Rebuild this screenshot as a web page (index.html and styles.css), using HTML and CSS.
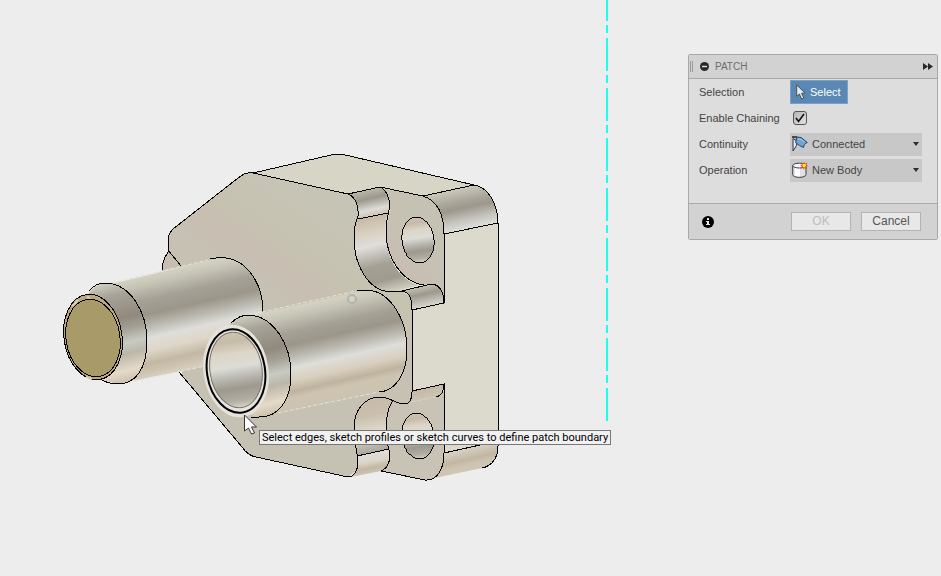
FILE: index.html
```html
<!DOCTYPE html>
<html lang="en">
<head>
    <meta charset="UTF-8">
    <meta name="viewport" content="width=device-width, initial-scale=1">
    <title>Patch</title>
    <link rel="stylesheet" href="styles.css">
</head>
<body>
    <main class="viewport">
        <svg class="scene" viewBox="0 0 941 576" preserveAspectRatio="xMinYMin meet" aria-hidden="true">
            <defs>
                <linearGradient id="plate" gradientUnits="userSpaceOnUse" x1="200" y1="330" x2="300" y2="180">
                    <stop offset="0" stop-color="#c6c2b3"/>
                    <stop offset="0.38" stop-color="#c6c1b2"/>
                    <stop offset="0.53" stop-color="#c8beb1"/>
                    <stop offset="0.68" stop-color="#c6c2b2"/>
                    <stop offset="1" stop-color="#c6c4b5"/>
                </linearGradient>
                <linearGradient id="boss" gradientUnits="userSpaceOnUse" x1="390" y1="270" x2="440" y2="220">
                    <stop offset="0" stop-color="#c8bdb1"/>
                    <stop offset="0.6" stop-color="#c6c2b3"/>
                </linearGradient>
                <linearGradient id="tubeLeft" gradientUnits="userSpaceOnUse" x1="160" y1="271" x2="183" y2="373">
                    <stop offset="0" stop-color="#d5d4c4"/>
                    <stop offset="0.1" stop-color="#c5c3b5"/>
                    <stop offset="0.24" stop-color="#a5a196"/>
                    <stop offset="0.38" stop-color="#9c968a"/>
                    <stop offset="0.5" stop-color="#bdbbb2"/>
                    <stop offset="0.6" stop-color="#dededa"/>
                    <stop offset="0.72" stop-color="#ded6c8"/>
                    <stop offset="0.84" stop-color="#c3b8a3"/>
                    <stop offset="0.92" stop-color="#cec4b1"/>
                    <stop offset="1" stop-color="#dcd6c8"/>
                </linearGradient>
                <linearGradient id="tubeRight" gradientUnits="userSpaceOnUse" x1="310" y1="302" x2="333" y2="404">
                    <stop offset="0" stop-color="#d5d4c4"/>
                    <stop offset="0.1" stop-color="#c5c3b5"/>
                    <stop offset="0.24" stop-color="#a5a196"/>
                    <stop offset="0.36" stop-color="#9c968a"/>
                    <stop offset="0.48" stop-color="#bdbbb2"/>
                    <stop offset="0.58" stop-color="#dededa"/>
                    <stop offset="0.7" stop-color="#d8cfbf"/>
                    <stop offset="0.8" stop-color="#beb39e"/>
                    <stop offset="0.86" stop-color="#cec4b1"/>
                    <stop offset="1" stop-color="#cbc2b0"/>
                </linearGradient>
                <linearGradient id="chamfer" x1="0.3" y1="0" x2="0.45" y2="1">
                    <stop offset="0" stop-color="#cfcebe"/>
                    <stop offset="0.14" stop-color="#a7a398"/>
                    <stop offset="0.38" stop-color="#91897d"/>
                    <stop offset="0.5" stop-color="#a5a197"/>
                    <stop offset="0.63" stop-color="#c8cbc3"/>
                    <stop offset="0.74" stop-color="#bbb7a8"/>
                    <stop offset="0.9" stop-color="#e5dac8"/>
                    <stop offset="1" stop-color="#cfc4af"/>
                </linearGradient>
                <linearGradient id="bore" x1="0.5" y1="0" x2="0.5" y2="1">
                    <stop offset="0" stop-color="#ccc4b4"/>
                    <stop offset="0.12" stop-color="#c6bba7"/>
                    <stop offset="0.28" stop-color="#ddd5c6"/>
                    <stop offset="0.46" stop-color="#dcdcd7"/>
                    <stop offset="0.6" stop-color="#b9b7af"/>
                    <stop offset="0.74" stop-color="#9e998e"/>
                    <stop offset="0.9" stop-color="#b0ada2"/>
                    <stop offset="1" stop-color="#d6d5c7"/>
                </linearGradient>
                <linearGradient id="corner" gradientUnits="userSpaceOnUse" x1="452" y1="190" x2="461" y2="231">
                    <stop offset="0" stop-color="#cbc9ba"/>
                    <stop offset="0.3" stop-color="#aaa69b"/>
                    <stop offset="0.48" stop-color="#9d978c"/>
                    <stop offset="0.75" stop-color="#c3c2bb"/>
                    <stop offset="1" stop-color="#e1e1dd"/>
                </linearGradient>
                <linearGradient id="grooveTop" gradientUnits="userSpaceOnUse" x1="364" y1="190" x2="370" y2="217">
                    <stop offset="0" stop-color="#bcb9ad"/>
                    <stop offset="0.35" stop-color="#9d988d"/>
                    <stop offset="0.75" stop-color="#dcdcd7"/>
                    <stop offset="1" stop-color="#cfc3ae"/>
                </linearGradient>
                <linearGradient id="groove" gradientUnits="userSpaceOnUse" x1="366" y1="217" x2="384" y2="292">
                    <stop offset="0" stop-color="#c5b9a4"/>
                    <stop offset="0.2" stop-color="#d9cfc0"/>
                    <stop offset="0.38" stop-color="#dededa"/>
                    <stop offset="0.65" stop-color="#a5a095"/>
                    <stop offset="0.85" stop-color="#a09b8f"/>
                    <stop offset="1" stop-color="#cccabb"/>
                </linearGradient>
                <linearGradient id="notch" gradientUnits="userSpaceOnUse" x1="421" y1="285" x2="426" y2="308">
                    <stop offset="0" stop-color="#cbc9ba"/>
                    <stop offset="0.4" stop-color="#9d988d"/>
                    <stop offset="1" stop-color="#deddd7"/>
                </linearGradient>
                <linearGradient id="notchLow" gradientUnits="userSpaceOnUse" x1="426" y1="387" x2="429" y2="400">
                    <stop offset="0" stop-color="#c3b8a4"/>
                    <stop offset="1" stop-color="#cfc6b5"/>
                </linearGradient>
                <linearGradient id="grooveLow" gradientUnits="userSpaceOnUse" x1="366" y1="398" x2="378" y2="456">
                    <stop offset="0" stop-color="#c4bba8"/>
                    <stop offset="0.3" stop-color="#cabfac"/>
                    <stop offset="0.6" stop-color="#e0dbd0"/>
                    <stop offset="0.85" stop-color="#b4b1a7"/>
                    <stop offset="1" stop-color="#a39e93"/>
                </linearGradient>
                <linearGradient id="grooveFoot" gradientUnits="userSpaceOnUse" x1="371" y1="452" x2="375" y2="474">
                    <stop offset="0" stop-color="#dededa"/>
                    <stop offset="0.4" stop-color="#ddd6c9"/>
                    <stop offset="0.7" stop-color="#c3b8a4"/>
                    <stop offset="1" stop-color="#cfc7b6"/>
                </linearGradient>
                <linearGradient id="footBand" gradientUnits="userSpaceOnUse" x1="460" y1="448" x2="466" y2="473">
                    <stop offset="0" stop-color="#dcd7ca"/>
                    <stop offset="0.5" stop-color="#c1b6a1"/>
                    <stop offset="0.7" stop-color="#cdc3b0"/>
                    <stop offset="1" stop-color="#cfc7b6"/>
                </linearGradient>
            </defs>

            <!-- construction axis -->
            <path class="axis" d="M607 -12V421"/>

            <!-- shaded faces -->
            <g>
                <path fill="#d7d5c6" d="M253 173L331 155L341 154L474 185L423 197L382 188L348 194Z"/>
                <path fill="#dcd9cd" d="M444 234L498 223V443L444 454V384L412 391V310L444 303Z"/>
                <path fill="url(#corner)" d="M423 196L474 185C488 187 498 204 498 223L444 234C444 213 436 200 423 196Z"/>
                <path fill="url(#footBand)" d="M444 453L498 441V446C498 458 492 466 482 468L430 479C439 475 444 465 444 453Z"/>
                <path fill="#c8beb0" d="M169 251C165 256 162 263 162 271L182 267Z"/>
                <path fill="url(#plate)" d="M253 173C246 172 242 175 238 178L173 229C169 233 168 236 168 241V250L182 267V375L242 447C246 453 250 456 256 457L348 477L357 470L413 400V310L410 296L402 291L391 292L358 216C359 203 355 197 348 194Z"/>
                <path fill="url(#boss)" d="M382 188L423 196C438 201 444 216 444 234V303L435 284L420 285C398 277 386 254 386 231C386 222 390 215 390 206C390 198 387 191 382 188Z"/>
                <path fill="url(#grooveTop)" d="M348 194L380 187C387 190 390 198 390 207L388 214L358 220C359 207 357 197 348 194Z"/>
                <path fill="url(#groove)" d="M358 219L388 213C384 225 386 238 388 249C392 268 405 282 420 285L391 292C367 291 354 263 354 238C354 231 355 226 358 219Z"/>
                <path fill="url(#notch)" d="M391 292L431 284C440 284 444 293 444 303L412 310C413 299 410 293 402 291Z"/>
                <path fill="url(#notchLow)" d="M412 391L444 384C444 391 441 397 436 397L411 402Z"/>
                <path fill="#c8c3b4" d="M393 401L402 404C408 405 412 401 412 402L436 397C441 396 444 393 444 389V453C444 468 438 481 425 480L381 471C388 468 390 461 389 450C385 432 385 411 393 401Z"/>
                <path fill="url(#grooveLow)" d="M354 427C354 410 365 397 380 397C385 397 389 399 393 401C385 412 386 432 389 449L357 456C355 446 354 437 354 427Z"/>
                <path fill="url(#grooveFoot)" d="M357 456L389 449C391 461 388 468 381 471L351 477C357 473 359 466 357 456Z"/>
                <ellipse fill="url(#bore)" cx="418" cy="240" rx="16" ry="23" transform="rotate(-8 418 240)"/>
                <ellipse fill="url(#bore)" cx="418" cy="436" rx="16" ry="23" transform="rotate(-8 418 436)"/>
            </g>

            <!-- model edges -->
            <g class="edges">
                <path d="M253 173L331 155L341 154L474 185C488 187 498 204 498 223V446C498 458 492 466 482 468"/>
                <path d="M253 173C246 172 242 175 238 178L173 229C169 233 168 236 168 241V250L181 266M169 251C165 256 162 263 162 270"/>
                <path d="M179 372L242 447C246 453 250 456 256 457L348 477C355 477 358 468 358 463C358 456 354 442 354 427C354 410 365 397 380 397C390 397 396 404 404 404C410 404 412 398 412 392V310C412 298 410 291 399 291"/>
                <path d="M253 173L348 194C356 197 359 208 358 216C355 223 354 231 354 238C354 263 367 291 391 292L402 291L431 284C440 284 444 293 444 303L412 310"/>
                <path d="M348 194L380 187L423 196C438 201 444 216 444 234V303M423 196L474 185M444 234L498 223"/>
                <path d="M380 187C387 190 391 201 389 210C387 219 386 223 386 231C386 258 402 282 424 285M358 219L388 213"/>
                <path d="M412 391L444 384V453C444 468 438 481 425 480L381 471C388 468 391 461 389 450C384 432 386 408 393 401M357 456L389 449M444 453L498 441M444 384C444 391 441 396 436 397"/>
                <ellipse cx="418" cy="240" rx="16" ry="23" transform="rotate(-8 418 240)"/>
                <ellipse cx="418" cy="436" rx="16" ry="23" transform="rotate(-8 418 436)"/>
            </g>

            <!-- left tube, already patched -->
            <path fill="url(#tubeLeft)" d="M103 286L210 260C245 250 263 283 263 312L225 362L117 384Z"/>
            <path fill="url(#chamfer)" d="M87 296C92 288 97 284 105 283C130 283 147 312 147 341C147 368 136 384 118 384L98 379Z"/>
            <g class="edges">
                <path d="M210 259C245 251 263 283 263 312M89 291C93 286 98 283 105 283C130 283 147 312 147 341C147 368 136 384 118 384C112 384 105 382 100 379"/>
            </g>
            <path class="hidden-edge" d="M112 283L208 260M128 383L205 366"/>
            <g class="edges">
                <ellipse fill="#b9aa78" cx="93" cy="337" rx="29" ry="43" transform="rotate(-9 93 337)"/>
                <ellipse fill="#a89b69" cx="93" cy="338" rx="27" ry="39" transform="rotate(-9 93 338)"/>
            </g>
            <path class="seam" d="M72 306L78 300M87 297L90 298M86 377L92 379"/>

            <!-- right tube, boundary highlighted -->
            <path fill="url(#tubeRight)" d="M248 316L357 292C389 283 407 319 407 350C407 373 396 391 379 392L258 417Z"/>
            <path fill="url(#chamfer)" d="M229 326C235 318 241 315 249 315C273 316 291 344 291 374C291 400 279 417 259 417L241 412Z"/>
            <g class="edges">
                <path d="M357 291C389 284 407 319 407 350C407 373 396 391 379 392M231 323C236 318 241 315 249 315C273 316 291 344 291 374C291 400 279 417 259 417H251"/>
            </g>
            <path class="hidden-edge" d="M262 312L356 291M278 413L379 392"/>
            <ellipse class="halo" cx="236" cy="371" rx="29" ry="43" transform="rotate(-9 236 371)"/>
            <ellipse fill="url(#bore)" stroke="#77736c" cx="236" cy="370" rx="26" ry="38" transform="rotate(-9 236 370)"/>
            <ellipse class="inner-halo" cx="236" cy="370" rx="28" ry="40" transform="rotate(-9 236 370)"/>
            <ellipse class="boundary" cx="236" cy="371" rx="29" ry="42" transform="rotate(-9 236 371)"/>
            <circle class="snap-point" cx="352" cy="299" r="4"/>

            <!-- mouse pointer -->
            <path class="pointer" d="M244.5 415V431L248.5 428L251.5 434L254.5 433L251.5 427H256.5Z"/>
        </svg>

        <div class="tooltip" role="tooltip">Select edges, sketch profiles or sketch curves to define patch boundary</div>

        <form class="panel" onsubmit="return false">
            <header class="panel-header">
                <span class="grip"></span>
                <button type="button" class="icon-btn" aria-label="Collapse">
                    <svg width="9" height="9" viewBox="0 0 9 9"><circle cx="4.5" cy="4.5" r="4.5" fill="#292929"/><path d="M2 4.5H7" stroke="#e4e4e4" stroke-width="1.4"/></svg>
                </button>
                <h1 class="panel-title">PATCH</h1>
                <button type="button" class="icon-btn expand" aria-label="Expand">
                    <svg width="10" height="7" viewBox="0 0 10 7"><path d="M0 0L5 3.5L0 7ZM5 0L10 3.5L5 7Z" fill="#292929"/></svg>
                </button>
            </header>

            <div class="panel-body">
                <div class="row">
                    <label for="select">Selection</label>
                    <button type="button" class="select-btn" id="select">
                        <svg width="10" height="16" viewBox="0 0 10 16"><path d="M.7 1V12.3L3.4 10L5.6 15L7.8 14L5.6 9.2H9.2Z" fill="#e9eaeb" stroke="#46505a"/></svg>
                        <span>Select</span>
                    </button>
                </div>
                <div class="row">
                    <label for="chaining">Enable Chaining</label>
                    <span class="check">
                        <input type="checkbox" id="chaining" checked>
                        <svg width="14" height="14" viewBox="0 0 14 14"><path d="M3 7L5.5 10.5L11 3" fill="none" stroke="#111" stroke-width="1.6"/></svg>
                    </span>
                </div>
                <div class="row">
                    <label for="continuity">Continuity</label>
                    <span class="dropdown">
                        <svg width="16" height="16" viewBox="0 0 16 16">
                            <path d="M1 2.5L5 5L4.5 9.5L1 15Z" fill="#e8e8e8" stroke="#30343a"/>
                            <path d="M0 1H5" stroke="#222" stroke-width="1.5"/>
                            <path d="M5 1L9 1.5L15.3 6.5C13 7 12 9 11.5 11.5L7.5 9.5L3.5 6.5Z" fill="#70a2d2" stroke="#21466d"/>
                            <path d="M6 3L9 3.3L12.5 6" fill="none" stroke="#acd0ef"/>
                        </svg>
                        <select id="continuity"><option>Connected</option></select>
                        <svg class="caret" width="6" height="4" viewBox="0 0 6 4"><path d="M0 0H6L3 4Z" fill="#2d2d2d"/></svg>
                    </span>
                </div>
                <div class="row">
                    <label for="operation">Operation</label>
                    <span class="dropdown">
                        <svg width="16" height="16" viewBox="0 0 16 16">
                            <path d="M.7 4V12.5C.7 16.3 14 16.3 14 12.5V4Z" fill="#e0e0e6" stroke="#3b3e49"/>
                            <path d="M3 5V13.5C5 14.5 7 14.5 8 14.3V5Z" fill="#fff"/>
                            <ellipse cx="7.4" cy="3.6" rx="6.6" ry="2.4" fill="#f7f7fa" stroke="#3b3e49"/>
                            <path d="M12 -.5L13 1.7L15.5 .5L14.5 2.8L16 4L14.5 4.7L15.2 7L12.8 5.8L11.8 8L11 5.6L8.5 6.5L9.7 4.3L8 3L10.2 2.4L9.2 0L11.4 1.5Z" fill="#e05316"/>
                            <circle cx="12.2" cy="3.6" r="1.8" fill="#ffe34a"/>
                        </svg>
                        <select id="operation"><option>New Body</option></select>
                        <svg class="caret" width="6" height="4" viewBox="0 0 6 4"><path d="M0 0H6L3 4Z" fill="#2d2d2d"/></svg>
                    </span>
                </div>
            </div>

            <footer class="panel-footer">
                <button type="button" class="icon-btn info" aria-label="Info">
                    <svg width="12" height="12" viewBox="0 0 12 12"><circle cx="6" cy="6" r="6" fill="#000"/><path d="M5 2H7V4H5ZM4 5H7V8H8V9H4V8H5V6H4Z" fill="#e8e8e8"/></svg>
                </button>
                <button type="submit" class="btn" disabled>OK</button>
                <button type="button" class="btn">Cancel</button>
            </footer>
        </form>
    </main>
</body>
</html>
```
FILE: styles.css
```css
* {
    box-sizing: border-box;
}
body {
    margin: 0;
    background: #ededed;
    font-family: "Liberation Sans", Arial, sans-serif;
    font-size: 11px;
    color: #444;
}
button, select {
    font: inherit;
    color: inherit;
}
.viewport {
    position: relative;
    display: flex;
    justify-content: flex-end;
    align-items: flex-start;
    min-height: 100vh;
    padding: 54px 3px 0 0;
    overflow: hidden;
}

/* model */
.scene {
    position: absolute;
    top: 0;
    left: 0;
    width: 100%;
}
.axis {
    stroke: #1cffed;
    stroke-width: 2;
    stroke-dasharray: 33 4 8 5;
}
.edges {
    fill: none;
    stroke: #000;
    stroke-width: 1;
    shape-rendering: crispEdges;
}
.hidden-edge {
    fill: none;
    stroke: #e4e3dc;
    stroke-dasharray: 4 2;
}
.seam {
    fill: none;
    stroke: #d6d0be;
    stroke-width: 2;
}
.halo {
    fill: #eae8e1;
    stroke: #e6e3dc;
    stroke-width: 7;
}
.inner-halo {
    fill: none;
    stroke: #e5e3dd;
    stroke-width: 2;
}
.boundary {
    fill: none;
    stroke: #000;
    stroke-width: 2;
}
.snap-point {
    fill: #d3d2ca;
    stroke: #b5b4ab;
    stroke-width: 2;
}
.pointer {
    fill: #fff;
    stroke: #333;
}
.tooltip {
    position: absolute;
    top: 430px;
    left: 259px;
    padding: 0 2px;
    border: 1px solid #767676;
    background: #f1f1f2;
    color: #000;
    font-family: Tahoma, Roboto, sans-serif;
    font-size: 11px;
    line-height: 13px;
    white-space: nowrap;
}

/* command panel */
.panel {
    position: relative;
    width: 250px;
    border: 1px solid #a9a9a9;
    border-radius: 2px;
    background: #dddddd;
}
.panel-header {
    display: flex;
    align-items: center;
    height: 24px;
    padding: 0 4px 0 1px;
    border-bottom: 1px solid #a9a9a9;
    background: #d2d2d2;
}
.grip {
    width: 3px;
    height: 11px;
    margin-right: 7px;
    border: solid #999;
    border-width: 0 1px;
}
.icon-btn {
    display: flex;
    padding: 0;
    border: none;
    background: none;
}
.panel-title {
    margin: 0 0 0 6px;
    color: #6d6d6d;
    font-size: 10px;
    font-weight: normal;
}
.expand {
    margin-left: auto;
}
.panel-body {
    padding: 0 15px 20px 10px;
}
.row {
    display: grid;
    grid-template-columns: 91px 1fr;
    align-items: center;
    height: 26px;
}
.select-btn {
    display: flex;
    align-items: center;
    justify-self: start;
    gap: 4px;
    width: 58px;
    height: 24px;
    padding: 0 5px;
    border: 1px solid #79a2c6;
    background: #5888b3;
    color: #fff;
}
.check {
    display: grid;
    width: 14px;
    margin-left: 3px;
}
.check > * {
    grid-area: 1 / 1;
}
.check input {
    appearance: none;
    width: 14px;
    height: 14px;
    margin: 0;
    border: 1px solid #555;
    border-radius: 3px;
    background: linear-gradient(135deg, #b5b5b5, #e4e4e4);
}
.check svg {
    pointer-events: none;
}
.check input:not(:checked) + svg {
    display: none;
}
.dropdown {
    display: flex;
    align-items: center;
    height: 23px;
    padding: 0 3px 0 2px;
    background: #c8c8c8;
}
.dropdown select {
    flex: 1;
    appearance: none;
    height: 23px;
    padding: 0 0 0 4px;
    border: none;
    background: none;
}
.caret {
    pointer-events: none;
}
.panel-footer {
    display: flex;
    align-items: center;
    gap: 10px;
    height: 36px;
    padding: 0 16px 0 13px;
    border-top: 1px solid #a9a9a9;
    background: #d2d2d2;
}
.info {
    margin-right: auto;
}
.btn {
    width: 60px;
    height: 19px;
    padding: 0;
    border: 1px solid #b3b3b3;
    background: #e8e8e8;
    color: #555;
    font-size: 12px;
    line-height: 17px;
}
.btn:disabled {
    color: #bdbdbd;
}
```
